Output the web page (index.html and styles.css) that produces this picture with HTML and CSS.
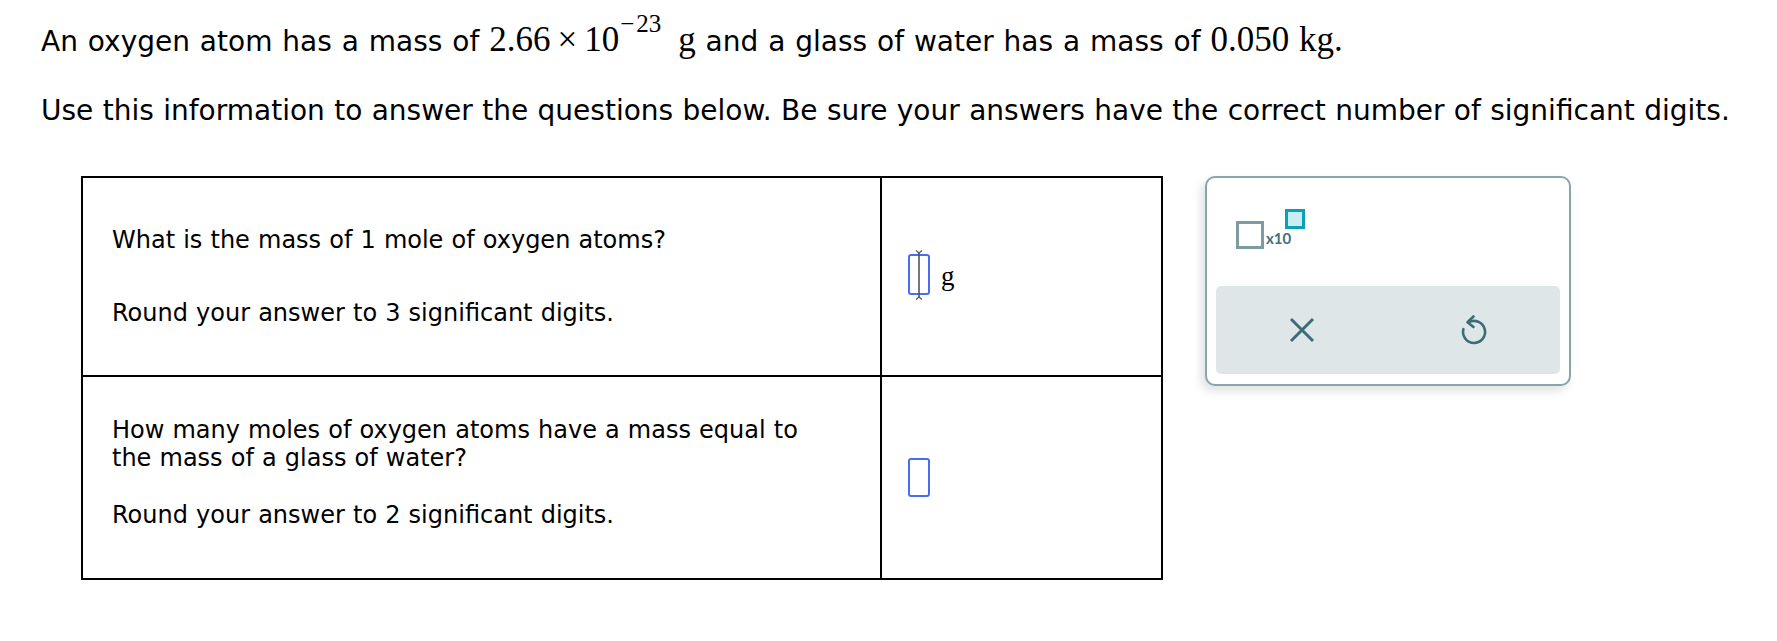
FILE: index.html
```html
<!DOCTYPE html>
<html lang="en">
<head>
<meta charset="utf-8">
<title>Oxygen atom mass</title>
<link rel="stylesheet" href="styles.css">
</head>
<body>
<div class="page">
  <p class="intro l1">An oxygen atom has a mass of <span class="math">2.66<span class="times">×</span>10<sup class="exp">−<span class="ed">23</span></sup></span> <span class="math">g</span> and a glass of water has a mass of <span class="math big">0.050 kg.</span></p>
  <p class="intro l2">Use this information to answer the questions below. Be sure your answers have the correct number of significant digits.</p>
  <div class="work">
    <div class="qtable">
      <div class="cell q q1">
        <p>What is the mass of 1 mole of oxygen atoms?</p>
        <p class="note">Round your answer to 3 significant digits.</p>
      </div>
      <div class="cell a a1">
        <span class="field">
          <svg class="caret" width="10" height="50" viewBox="0 0 10 50" aria-hidden="true">
            <path d="M5 3V47" stroke="#555" stroke-width="1.6" fill="none"/>
            <path d="M2 0.5L5 3L8 0.5M2 49.5L5 47L8 49.5" stroke="#555" stroke-width="1.2" fill="none"/>
          </svg>
        </span>
        <span class="unit">g</span>
      </div>
      <div class="cell q q2">
        <p>How many moles of oxygen atoms have a mass equal to<br>the mass of a glass of water?</p>
        <p class="note">Round your answer to 2 significant digits.</p>
      </div>
      <div class="cell a a2">
        <span class="field"></span>
      </div>
    </div>
    <div class="panel">
      <div class="tmpl">
        <span class="tbox"></span><span class="tx">x10</span><span class="tsup"></span>
      </div>
      <div class="actions">
        <button class="act" type="button" aria-label="Clear">
          <svg width="26" height="26" viewBox="0 0 26 26" aria-hidden="true">
            <path d="M2 2L24 24M24 2L2 24" stroke="#3c6d77" stroke-width="3" fill="none"/>
          </svg>
        </button>
        <button class="act" type="button" aria-label="Undo">
          <svg width="30" height="32" viewBox="0 0 30 32" aria-hidden="true">
            <path d="M9.6 8.4A11 11 0 1 1 4.4 15.2" stroke="#3c6d77" stroke-width="2.6" fill="none" stroke-linecap="round"/>
            <path d="M14.5 2.5L8.5 8.3L14.5 13" stroke="#3c6d77" stroke-width="2.6" fill="none" stroke-linecap="round" stroke-linejoin="round"/>
          </svg>
        </button>
      </div>
    </div>
  </div>
</div>
</body>
</html>
```

FILE: styles.css
```css
body {
  margin: 0;
  background: #fff;
  color: #000;
  font-family: "DejaVu Sans", Verdana, sans-serif;
}

.page {
  padding: 22px 0 0 41px;
}

.intro {
  margin: 0;
  font-size: 28px;
  line-height: 40px;
  word-spacing: 0.5px;
}

.l1 {
  word-spacing: 1px;
}

.l2 {
  margin-top: 29px;
}

.math {
  font-family: "Liberation Serif", "Times New Roman", serif;
  font-size: 35px;
  line-height: 0;
  word-spacing: 0;
}

.math.big {
  font-size: 35px;
  word-spacing: 1px;
}

.times {
  margin: 0 7px;
}

.exp {
  font-size: 25px;
  vertical-align: 19px;
  line-height: 0;
  margin: 0 7px 0 1px;
}

.ed {
  margin-left: 2px;
}

.work {
  display: flex;
  align-items: flex-start;
  gap: 42px;
  margin: 45px 0 0 40px;
}

.qtable {
  display: grid;
  grid-template-columns: 799px 279px;
  grid-template-rows: 199px 201px;
  border: 2px solid #000;
}

.cell {
  box-sizing: border-box;
  display: flex;
}

.q {
  flex-direction: column;
  justify-content: center;
  padding: 0 20px 0 29px;
  border-right: 2px solid #000;
  font-size: 24px;
  line-height: 28px;
  word-spacing: 0.5px;
}

.q p {
  margin: 0;
}

.q1 .note {
  margin-top: 45px;
}

.q2 .note {
  margin-top: 29px;
}

.q1,
.a1 {
  border-bottom: 2px solid #000;
}

.q2 {
  padding-bottom: 10px;
}

.a {
  align-items: center;
  padding-left: 26px;
}

.a1 {
  padding-bottom: 5px;
}

.field {
  position: relative;
  box-sizing: border-box;
  width: 22px;
  height: 41px;
  border: 2px solid #4a6cf5;
  border-radius: 3px;
}

.a2 .field {
  height: 39px;
}

.caret {
  position: absolute;
  left: 4px;
  top: -6px;
}

.unit {
  font-family: "Liberation Serif", "Times New Roman", serif;
  font-size: 27px;
  margin-left: 11px;
  margin-top: 4px;
}

.panel {
  box-sizing: border-box;
  width: 366px;
  height: 210px;
  border: 2px solid #88a5aa;
  border-radius: 10px;
  padding: 0 9px 10px;
  display: flex;
  flex-direction: column;
  background: #fff;
  box-shadow: -4px 5px 10px rgba(60, 80, 90, 0.16);
}

.tmpl {
  flex: 1;
  display: flex;
  align-items: flex-start;
  padding: 31px 0 0 20px;
}

.tbox {
  box-sizing: border-box;
  width: 28px;
  height: 28px;
  border: 3px solid #7d9ca1;
  margin-top: 12px;
}

.tx {
  font-family: Lato, "Open Sans", sans-serif;
  font-size: 15px;
  font-weight: 700;
  line-height: 1;
  color: #44707a;
  margin: 22px 0 0 2px;
}

.tsup {
  box-sizing: border-box;
  width: 20px;
  height: 20px;
  border: 3px solid #0aa0b5;
  background: #c8eef3;
  margin-left: -6px;
}

.actions {
  height: 88px;
  background: #dfe6e8;
  border-radius: 5px;
  display: flex;
}

.act {
  flex: 1;
  display: flex;
  align-items: center;
  justify-content: center;
  border: 0;
  padding: 0;
  background: transparent;
}
```
